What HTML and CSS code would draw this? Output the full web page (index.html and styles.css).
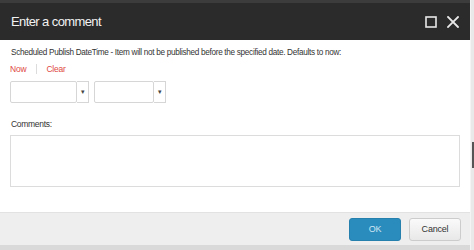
FILE: index.html
```html
<!DOCTYPE html>
<html>
<head>
<meta charset="utf-8">
<link rel="stylesheet" href="styles.css">
</head>
<body>
<div class="page">
  <div class="dialog">
    <div class="topstrip"></div>
    <div class="header">
      <span class="title">Enter a comment</span>
      <div class="actions">
        <svg class="icon" width="12" height="12" viewBox="0 0 12 12"><rect x="1" y="1" width="10" height="10" fill="none" stroke="#e8e8e8" stroke-width="1.6"/></svg>
        <svg class="icon" width="12" height="12" viewBox="0 0 12 12"><path d="M1 1 L11 11 M11 1 L1 11" stroke="#e8e8e8" stroke-width="1.8" stroke-linecap="square"/></svg>
      </div>
    </div>
    <div class="content">
      <div class="hint">Scheduled Publish DateTime - Item will not be published before the specified date. Defaults to now:</div>
      <div class="links"><span class="link">Now</span><span class="sep"></span><span class="link">Clear</span></div>
      <div class="pickers">
        <div class="picker"><div class="field date"></div><div class="drop">&#9662;</div></div>
        <div class="picker"><div class="field time"></div><div class="drop">&#9662;</div></div>
      </div>
      <div class="label">Comments:</div>
      <div class="textarea"></div>
    </div>
    <div class="footer">
      <button class="btn ok">OK</button>
      <button class="btn cancel">Cancel</button>
    </div>
    <div class="bottomstrip"></div>
  </div>
  <div class="scroll"><div class="thumb"></div></div>
</div>
</body>
</html>
```
FILE: styles.css
```css
html, body { margin: 0; padding: 0; }
body { width: 474px; height: 250px; overflow: hidden; font-family: "Liberation Sans", Arial, sans-serif; background: #fff; }
.page { display: flex; width: 474px; height: 250px; }
.dialog { width: 470px; display: flex; flex-direction: column; }
.topstrip { height: 3px; background: #3c3c3c; }
.header { height: 37px; background: #2b2b2b; display: flex; align-items: center; justify-content: space-between; padding: 0 11px 0 11px; box-sizing: border-box; }
.title { color: #f2f2f2; font-size: 13px; letter-spacing: -0.6px; }
.actions { display: flex; gap: 10px; align-items: center; }
.content { height: 172px; background: #fff; padding: 8px 10px 0 10px; box-sizing: border-box; display: flex; flex-direction: column; }
.hint { font-size: 8.2px; line-height: 10px; letter-spacing: -0.3px; color: #333; margin-left: 1px; }
.links { display: flex; align-items: center; margin-top: 6px; font-size: 8.5px; line-height: 10px; letter-spacing: -0.2px; }
.link { color: #e0493f; }
.sep { width: 1px; height: 10px; background: #dcdcdc; margin: 0 9px 0 10px; }
.pickers { display: flex; gap: 5px; margin-top: 7px; }
.picker { display: flex; }
.field { height: 22px; border: 1px solid #d6d6d6; border-radius: 2px; box-sizing: border-box; background: #fff; }
.date { width: 67px; }
.time { width: 60px; }
.drop { width: 12px; height: 22px; border: 1px solid #d6d6d6; border-left: none; box-sizing: border-box; font-size: 7px; color: #444; display: flex; align-items: center; justify-content: center; }
.label { font-size: 8.5px; line-height: 10px; letter-spacing: -0.3px; color: #333; margin-top: 16px; margin-left: 1px; }
.textarea { height: 52px; width: 450px; border: 1px solid #dcdcdc; box-sizing: border-box; margin-top: 6px; }
.footer { height: 33px; background: #eeeeee; border-top: 1px solid #e2e2e2; box-sizing: border-box; display: flex; justify-content: flex-end; align-items: center; gap: 8px; padding-right: 9px; }
.btn { height: 23px; width: 52px; font-family: "Liberation Sans", Arial, sans-serif; font-size: 9px; letter-spacing: -0.2px; border-radius: 3px; padding: 0; }
.ok { background: #2a8bbd; border: 1px solid #2680ae; color: #cfe6f3; }
.cancel { background: linear-gradient(#fafafa, #e8e8e8); border: 1px solid #cccccc; color: #333; }
.bottomstrip { height: 5px; background: #d9d9d9; }
.scroll { width: 4px; background: #e9e9e9; border-left: 1px solid #f4f4f4; position: relative; }
.thumb { position: absolute; left: 1px; right: 0; top: 142px; height: 26px; background: #555; }
```
